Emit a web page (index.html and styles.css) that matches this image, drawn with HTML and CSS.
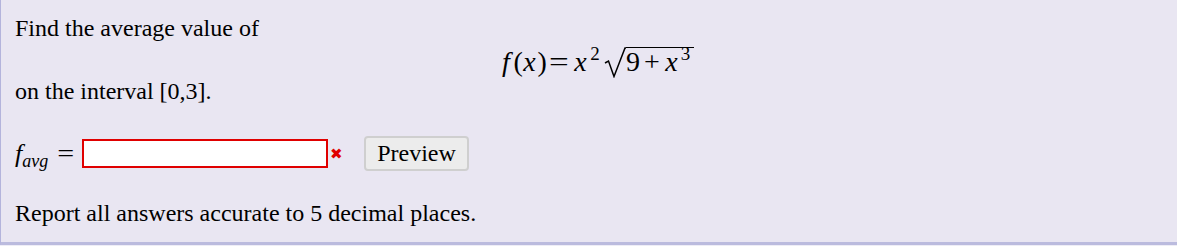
FILE: index.html
```
<!DOCTYPE html>
<html lang="en">
<head>
    <meta charset="UTF-8">
    <title>Average Value</title>
    <link rel="stylesheet" href="styles.css">
</head>
<body>
    <div class="problem">
        <p class="line">Find the average value of</p>
        <div class="display-math">
            <span class="formula">
                <span class="mi w15">f</span><span class="mo w8">(</span><span class="mi w16">x</span><span class="mo w9">)</span><span class="rel w25"><span class="eq">=</span></span><span class="mi w18">x</span><span class="sup w11">2</span><span class="sqrt"><svg class="radical" width="22" height="31" viewBox="0 0 22 31">
                        <path d="M1 16 L4.5 14 L10 29.5 L21 1 L22 1" fill="none" stroke="#000" stroke-width="1.5" stroke-linejoin="miter"/>
                    </svg><span class="radicand"><span class="mn w15">9</span><span class="bin w23">+</span><span class="mi w16">x</span><span class="sup w12">3</span></span></span>
            </span>
        </div>
        <p class="line">on the interval [0,3].</p>

        <div class="answer-row">
            <span class="fname"><span class="mi">f</span><sub class="sub">avg</sub></span>
            <span class="rel-row"><span class="eq">=</span></span>
            <input type="text" class="answer incorrect">
            <span class="mark">&#10006;</span>
            <button class="preview">Preview</button>
        </div>

        <p class="line note">Report all answers accurate to 5 decimal places.</p>
    </div>
</body>
</html>
```

FILE: styles.css
```
body {
    margin: 0;
    background: #eeedf6;
    font-family: 'Liberation Serif', 'Times New Roman', serif;
    color: #000;
}

.problem {
    background: #e9e6f2;
    border-left: 1px solid #b4b4dc;
    border-bottom: 3px solid #bbbbde;
    padding: 15px 14px 16px 14px;
    height: 211px;
}

.line {
    margin: 0;
    font-size: 24px;
}

/* displayed formula */
.display-math {
    height: 36px;
    padding-left: 14px;
    text-align: center;
    font-size: 28px;
    line-height: 36px;
    white-space: nowrap;
}

.formula {
    position: relative;
    top: 2px;
}

.formula > span,
.radicand > span {
    display: inline-block;
    text-align: center;
}

.w8 { width: 8px; }
.w9 { width: 9px; }
.w11 { width: 11px; }
.w12 { width: 12px; }
.w15 { width: 15px; }
.w16 { width: 16px; }
.w18 { width: 18px; }
.w23 { width: 23px; }
.w25 { width: 25px; }

.mi {
    font-style: italic;
}

.eq {
    display: inline-block;
    transform: scaleX(1.25);
}

.sup {
    font-size: 19px;
    vertical-align: 11px;
    line-height: 0;
}

.sqrt {
    margin-left: 3px;
}

.radical {
    vertical-align: -7px;
}

.radicand {
    display: inline-block;
    border-top: 1.5px solid #000;
    line-height: 28px;
    padding-right: 2px;
}

/* answer line */
.answer-row {
    display: flex;
    align-items: center;
    height: 35px;
    margin-top: 31px;
    font-size: 26px;
}

.fname {
    width: 38px;
}

.sub {
    font-size: 18px;
    font-style: italic;
    vertical-align: -5px;
    line-height: 0;
}

.rel-row {
    width: 29px;
    padding-left: 6px;
    box-sizing: border-box;
    font-size: 24px;
}

.answer {
    width: 246px;
    height: 29px;
    box-sizing: border-box;
    border: 2px solid #e00000;
    background: #fff;
    padding: 0 4px;
    margin: 0;
    font-size: 16px;
}

.mark {
    color: #e00000;
    font-family: 'DejaVu Sans', sans-serif;
    font-size: 15px;
    margin-left: 2px;
    width: 34px;
}

.preview {
    height: 35px;
    width: 105px;
    padding: 0;
    background: #ececec;
    border: 2px solid #cfcfcf;
    border-radius: 4px;
    font-family: 'Liberation Serif', 'Times New Roman', serif;
    font-size: 24px;
    color: #000;
}

.note {
    margin-top: 29px;
}
```
